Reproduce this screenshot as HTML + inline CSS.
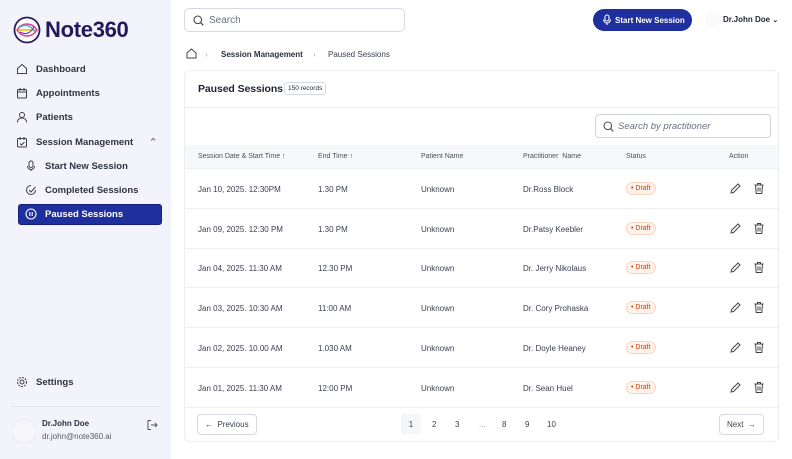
<!DOCTYPE html>
<html><head><meta charset="utf-8"><style>
*{box-sizing:border-box;margin:0;padding:0}
body{width:792px;height:459px;overflow:hidden;font-family:"Liberation Sans",sans-serif;background:#fff;position:relative;color:#1f2433}
.sb{position:absolute;left:0;top:0;width:171px;height:459px;background:#f3f4fb}
.logo{position:absolute;left:13px;top:16px;display:flex;align-items:center}
.logo span{font-size:22px;color:#23185a;margin-left:4px;font-weight:600;letter-spacing:-0.3px}
.nav{position:absolute;left:16px;font-size:9.5px;color:#2f3442;display:flex;align-items:center;font-weight:600}
.nav svg{margin-right:8px}
.act{position:absolute;left:18px;top:204px;width:144px;height:21px;background:#1f2f9e;border-radius:3px;border:1px solid #14207a}
.top{position:absolute}
.srch{left:184px;top:8px;width:221px;height:24px;border:1px solid #d6d9e0;border-radius:5px;font-size:10px;color:#6b7080;padding:6px 0 0 24px}
.btn{left:593px;top:9px;width:99px;height:22px;background:#1f2f9e;border-radius:11px;color:#fff;font-size:8px;font-weight:700;padding:7px 0 0 22px}
.card{position:absolute;left:184px;top:70px;width:595px;height:372px;border:1px solid #eceef2;border-radius:6px;background:#fff}
.row{position:absolute;left:0;width:593px;height:40px;border-bottom:1px solid #eceef2;font-size:8px;color:#3a3f4d}
.row div{position:absolute;top:16px}
.badge{font-size:7px;color:#c2410c;background:#fff2ea;border:1px solid #fbd4bd;border-radius:8px;padding:2px 4px;top:13px!important}
.pg{position:absolute;top:343px;font-size:8px;color:#3a3f4d}
</style></head><body>
<div class="sb">
 <div class="logo"><svg width="28" height="28" viewBox="0 0 28 28"><circle cx="14" cy="14" r="12.5" fill="#fff" stroke="#2a1f5e" stroke-width="1.8"/><path d="M4 14 C9 6 19 6 24 14 C19 22 9 22 4 14Z" fill="none" stroke="#e3368a" stroke-width="1.4"/><path d="M5 14 L23 14" stroke="#f2b400" stroke-width="1.5"/><path d="M6 12 C11 8 17 8 22 16" stroke="#33c0d8" stroke-width="1.4" fill="none"/><path d="M7 16 C12 19 17 18 21 11" stroke="#6d3be0" stroke-width="1.2" fill="none"/></svg><span>Note360</span></div>
 <div class="nav" style="top:63px"><svg width="12" height="12" viewBox="0 0 12 12" fill="none" stroke="#3a3f4d" stroke-width="1"><path d="M1.5 5.5 6 1.5l4.5 4v5h-9z"/></svg>Dashboard</div>
 <div class="nav" style="top:87px"><svg width="12" height="12" viewBox="0 0 12 12" fill="none" stroke="#3a3f4d" stroke-width="1"><rect x="1.5" y="2.5" width="9" height="8.5" rx="1"/><path d="M1.5 5h9M4 1v3M8 1v3"/></svg>Appointments</div>
 <div class="nav" style="top:111px"><svg width="12" height="12" viewBox="0 0 12 12" fill="none" stroke="#3a3f4d" stroke-width="1"><circle cx="6" cy="4" r="2.5"/><path d="M1.5 11.5c0-3 2-4.5 4.5-4.5s4.5 1.5 4.5 4.5"/></svg>Patients</div>
 <div class="nav" style="top:136px"><svg width="12" height="12" viewBox="0 0 12 12" fill="none" stroke="#3a3f4d" stroke-width="1"><rect x="1.5" y="2.5" width="9" height="8.5" rx="1"/><path d="M4 1v3M8 1v3M4 7.5l1.5 1.5 3-3"/></svg>Session Management<span style="margin-left:16px;color:#777">⌃</span></div>
 <div class="nav" style="top:160px;left:25px"><svg width="12" height="12" viewBox="0 0 12 12" fill="none" stroke="#3a3f4d" stroke-width="1"><rect x="4" y="1" width="4" height="6.5" rx="2"/><path d="M2.5 6a3.5 3.5 0 007 0M6 9.5V11"/></svg>Start New Session</div>
 <div class="nav" style="top:184px;left:25px"><svg width="12" height="12" viewBox="0 0 12 12" fill="none" stroke="#3a3f4d" stroke-width="1"><path d="M10.5 6A4.5 4.5 0 116 1.5"/><path d="M4 6l2 2 4.5-5"/></svg>Completed Sessions</div>
 <div class="act"></div>
 <div class="nav" style="top:208px;left:25px;color:#fff"><svg width="12" height="12" viewBox="0 0 12 12" fill="none" stroke="#fff" stroke-width="1.1"><circle cx="6" cy="6" r="5"/><path d="M4.8 4v4M7.2 4v4"/></svg>Paused Sessions</div>
 <div class="nav" style="top:376px"><svg width="12" height="12" viewBox="0 0 12 12" fill="none" stroke="#3a3f4d" stroke-width="1"><circle cx="6" cy="6" r="2"/><circle cx="6" cy="6" r="4.5" stroke-dasharray="2 1"/></svg>Settings</div>
 <div style="position:absolute;left:10px;right:10px;top:406px;border-top:1px solid #e7e9f2"></div>
 <div style="position:absolute;left:12px;top:419px;width:24px;height:24px;border-radius:50%;background:#f7f7fb;border:1px solid #eceef4"></div>
 <div style="position:absolute;left:42px;top:419px;font-size:8px;font-weight:700;color:#2a2f3d">Dr.John Doe</div>
 <div style="position:absolute;left:42px;top:432px;font-size:8px;color:#555a66">dr.john@note360.ai</div>
 <svg style="position:absolute;left:146px;top:419px" width="12" height="12" viewBox="0 0 12 12" fill="none" stroke="#555" stroke-width="1"><path d="M5 1.5H2v9h3M5 6h6M9 4l2 2-2 2"/></svg>
</div>
<div class="top srch"><svg style="position:absolute;left:8px;top:6px" width="11" height="11" viewBox="0 0 11 11" fill="none" stroke="#444" stroke-width="1.1"><circle cx="4.8" cy="4.8" r="3.8"/><path d="M7.7 7.7l2.6 2.6"/></svg>Search</div>
<div class="top btn"><svg style="position:absolute;left:9px;top:5px" width="10" height="12" viewBox="0 0 10 12" fill="none" stroke="#fff" stroke-width="1.1"><rect x="3" y="1" width="4" height="6" rx="2"/><path d="M1.5 5.5a3.5 3.5 0 007 0M5 9v2"/></svg>Start New Session</div>
<div class="top" style="left:705px;top:11px;width:16px;height:16px;border-radius:50%;background:#fafafa"></div>
<div class="top" style="left:723px;top:15px;font-size:8px;font-weight:700">Dr.John Doe <span style="font-size:7px">⌄</span></div>
<svg class="top" style="left:186px;top:48px" width="11" height="11" viewBox="0 0 11 11" fill="none" stroke="#444" stroke-width="1"><path d="M1 5 5.5 1 10 5v5H1z"/></svg>
<div class="top" style="left:205px;top:50px;font-size:8px;color:#aaa">›</div>
<div class="top" style="left:221px;top:50px;font-size:8px;color:#2a2f3d;font-weight:600">Session Management</div>
<div class="top" style="left:313px;top:50px;font-size:8px;color:#aaa">›</div>
<div class="top" style="left:328px;top:50px;font-size:8px;color:#3a3f4d">Paused Sessions</div>
<div class="card">
 <div style="position:absolute;left:13px;top:12px;font-size:10.5px;font-weight:700;letter-spacing:-0.1px">Paused Sessions</div>
 <div style="position:absolute;left:99px;top:11px;font-size:6.5px;border:1px solid #d6d9e0;border-radius:3px;padding:2px 3px;background:#fff">150 records</div>
 <div style="position:absolute;left:0;right:0;top:36px;border-top:1px solid #eceef2"></div>
 <div style="position:absolute;left:410px;top:43px;width:176px;height:24px;border:1px solid #d0d3db;border-radius:4px;font-size:9.5px;font-style:italic;color:#6b7080;padding:6px 0 0 22px"><svg style="position:absolute;left:7px;top:6px" width="11" height="11" viewBox="0 0 11 11" fill="none" stroke="#555" stroke-width="1.1"><circle cx="4.8" cy="4.8" r="3.8"/><path d="M7.7 7.7l2.6 2.6"/></svg>Search by practitioner</div>
 <div class="row" style="top:74px;height:24px;background:#f7f8fa;font-size:7px;color:#4a4f5c"><div style="left:13px;top:8px">Session Date &amp; Start Time ↑</div><div style="left:133px;top:8px">End Time ↑</div><div style="left:236px;top:8px">Patient Name</div><div style="left:338px;top:8px">Practitioner &nbsp;Name</div><div style="left:441px;top:8px">Status</div><div style="left:544px;top:8px">Action</div></div>
 <div id="rows"></div>
 <div class="pg" style="left:12px;top:343px;border:1px solid #d6d9e0;border-radius:4px;padding:5px 7px">← &nbsp;Previous</div>
 <div class="pg" style="left:216px;width:20px;height:20px;background:#f5f6f8;border-radius:3px;text-align:center;padding-top:6px;top:343px">1</div>
 <div class="pg" style="left:247px;top:349px">2</div><div class="pg" style="left:270px;top:349px">3</div><div class="pg" style="left:294px;top:349px;color:#999">...</div><div class="pg" style="left:317px;top:349px">8</div><div class="pg" style="left:340px;top:349px">9</div><div class="pg" style="left:362px;top:349px">10</div>
 <div class="pg" style="left:534px;top:343px;border:1px solid #d6d9e0;border-radius:4px;padding:5px 7px">Next &nbsp;→</div>
</div>
<script>
var d=[["Jan 10, 2025. 12:30PM","1.30 PM","Dr.Ross Block"],["Jan 09, 2025. 12:30 PM","1.30 PM","Dr.Patsy Keebler"],["Jan 04, 2025. 11:30 AM","12.30 PM","Dr. Jerry Nikolaus"],["Jan 03, 2025. 10:30 AM","11:00 AM","Dr. Cory Prohaska"],["Jan 02, 2025. 10.00 AM","1.030 AM","Dr. Doyle Heaney"],["Jan 01, 2025. 11:30 AM","12:00 PM","Dr. Sean Huel"]];
var h="";d.forEach(function(r,i){h+='<div class="row" style="top:'+(98+i*39.7)+'px"><div style="left:13px">'+r[0]+'</div><div style="left:133px">'+r[1]+'</div><div style="left:236px">Unknown</div><div style="left:338px">'+r[2]+'</div><div class="badge" style="left:441px">• Draft</div><div style="left:544px;top:13px"><svg width="13" height="13" viewBox="0 0 13 13" fill="none" stroke="#444" stroke-width="1"><path d="M2 11l.5-2.5L9 2l2 2-6.5 6.5z"/></svg></div><div style="left:568px;top:13px"><svg width="12" height="13" viewBox="0 0 12 13" fill="none" stroke="#444" stroke-width="1"><path d="M1.5 3h9M4.5 3V1.5h3V3M2.5 3l.7 8.5h5.6L9.5 3M5 5.5v4M7 5.5v4"/></svg></div></div>'});
document.getElementById("rows").outerHTML=h;
</script>
</body></html>
